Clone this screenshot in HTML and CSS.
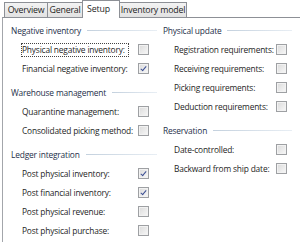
FILE: index.html
```html
<!DOCTYPE html>
<html lang="en">

<head>
    <meta charset="UTF-8">
    <title>Setup</title>
    <link rel="stylesheet" href="styles.css">
</head>

<body>
    <div class="tabs">
        <div class="tab tab-overview">Overview</div>
        <div class="tab tab-general">General</div>
        <div class="tab tab-setup active">Setup</div>
        <div class="tab tab-model">Inventory model</div>
    </div>

    <div class="panel">
        <div class="col col-left">
            <div class="group">
                <div class="group-title"><span>Negative inventory</span><i class="rule"></i></div>
                <div class="field"><span class="label focus">Physical negative inventory:</span><span class="check"></span></div>
                <div class="field"><span class="label">Financial negative inventory:</span><span class="check checked"></span></div>
            </div>
            <div class="group">
                <div class="group-title"><span>Warehouse management</span><i class="rule"></i></div>
                <div class="field"><span class="label">Quarantine management:</span><span class="check"></span></div>
                <div class="field"><span class="label">Consolidated picking method:</span><span class="check"></span></div>
            </div>
            <div class="group">
                <div class="group-title"><span>Ledger integration</span><i class="rule"></i></div>
                <div class="field"><span class="label">Post physical inventory:</span><span class="check checked"></span></div>
                <div class="field"><span class="label">Post financial inventory:</span><span class="check checked"></span></div>
                <div class="field"><span class="label">Post physical revenue:</span><span class="check"></span></div>
                <div class="field"><span class="label">Post physical purchase:</span><span class="check"></span></div>
            </div>
        </div>

        <div class="col col-right">
            <div class="group">
                <div class="group-title"><span>Physical update</span><i class="rule"></i></div>
                <div class="field"><span class="label">Registration requirements:</span><span class="check"></span></div>
                <div class="field"><span class="label">Receiving requirements:</span><span class="check"></span></div>
                <div class="field"><span class="label">Picking requirements:</span><span class="check"></span></div>
                <div class="field"><span class="label">Deduction requirements:</span><span class="check"></span></div>
            </div>
            <div class="group">
                <div class="group-title"><span>Reservation</span><i class="rule"></i></div>
                <div class="field"><span class="label">Date-controlled:</span><span class="check"></span></div>
                <div class="field"><span class="label">Backward from ship date:</span><span class="check"></span></div>
            </div>
        </div>
    </div>
</body>

</html>
```

FILE: styles.css
```css
* {
    margin: 0;
    padding: 0;
    box-sizing: border-box;
}

body {
    font-family: 'Open Sans', 'Noto Sans', sans-serif;
    font-size: 8.4px;
    letter-spacing: -0.18px;
    color: #1e1e1e;
    background-color: #fff;
    width: 300px;
    height: 242px;
    overflow: hidden;
    padding-left: 2px;
}

/* tab strip */
.tabs {
    display: flex;
    align-items: flex-end;
    height: 18px;
    padding-left: 2px;
    position: relative;
    z-index: 1;
}

.tab {
    height: 15px;
    line-height: 14px;
    text-align: center;
    font-size: 8.8px;
    margin-bottom: 1px;
    margin-right: -1px;
    border: 1px solid #8d9096;
    border-bottom: none;
    background: linear-gradient(to bottom, #f3f3f3, #e2e2e2);
    white-space: nowrap;
    flex-shrink: 0;
}

.tab-overview { width: 44px; }
.tab-general { width: 36px; }
.tab-setup { width: 38px; }
.tab-model { width: 68px; }

.tab.active {
    height: 18px;
    line-height: 16px;
    margin-bottom: 0;
    padding-right: 5px;
    background: #fff;
    position: relative;
    z-index: 2;
}

/* page body */
.panel {
    display: flex;
    gap: 6px;
    margin-top: -1px;
    border-top: 1px solid #8d9096;
    border-left: 1px solid #a3a6ab;
    padding: 3px 0 0 8px;
    height: 226px;
}

.col {
    flex-shrink: 0;
}

.col-left {
    width: 146px;
}

.col-right {
    width: 129px;
}

.group {
    margin-bottom: 5px;
}

.group-title {
    display: flex;
    align-items: center;
    height: 19px;
    color: #1e2f4a;
    white-space: nowrap;
}

.rule {
    flex: 1;
    height: 1px;
    margin-left: 6px;
    background: linear-gradient(to right, #c4d1de, #e8eef4);
}

.field {
    display: flex;
    align-items: center;
    height: 19px;
    padding-left: 11px;
}

.label {
    flex-shrink: 0;
    white-space: nowrap;
    line-height: 12px;
}

.col-left .label {
    width: 116px;
}

.col-right .label {
    width: 102px;
}

.label.focus {
    outline: 1px dotted #444;
    width: 106px;
    margin-right: 10px;
}

.check {
    flex-shrink: 0;
    width: 11px;
    height: 11px;
    border: 1px solid #9ea0a3;
    background: linear-gradient(to bottom right, #dadada, #f8f8f8);
    box-shadow: inset 0 0 0 1px #f2f2f2;
    position: relative;
}

.check.checked::after {
    content: '';
    position: absolute;
    left: 3px;
    top: 1px;
    width: 2px;
    height: 5px;
    border-right: 1.5px solid #3c4f93;
    border-bottom: 1.5px solid #3c4f93;
    transform: rotate(40deg);
}
```
